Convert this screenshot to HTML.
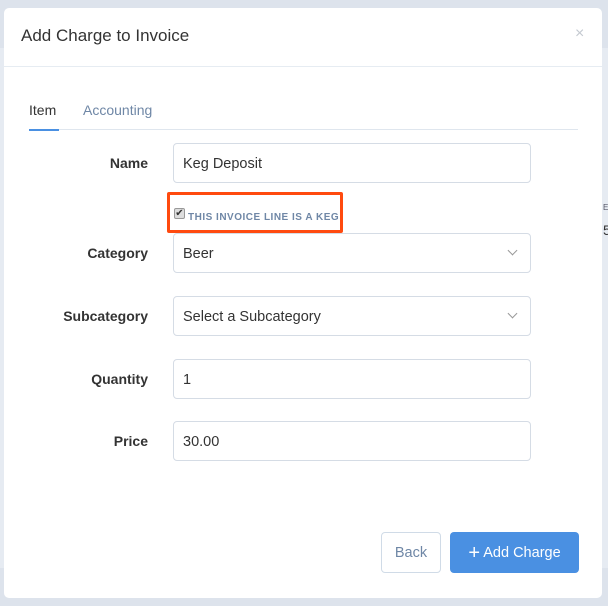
<!DOCTYPE html>
<html><head><style>
*{box-sizing:border-box;margin:0;padding:0}
body{width:608px;height:606px;background:#dde3ec;font-family:"Liberation Sans",sans-serif;position:relative;overflow:hidden}
.strip{position:absolute;left:0;top:48px;width:608px;height:520px;background:#e6ebf2}
.modal{position:absolute;left:4px;top:8px;width:598px;height:590px;background:#fff;border-radius:5px}
.abs{position:absolute}
.title{left:17px;top:18px;font-size:17px;color:#333}
.close{left:571px;top:17px;font-size:16px;color:#c4c9d0}
.hr{left:0;top:58px;width:598px;height:1px;background:#e6ecf2}
.tab{font-size:14px;top:94px}
.lab{font-size:14px;font-weight:bold;color:#333;width:144px;text-align:right;left:0}
.inp{left:169px;width:358px;height:40px;border:1px solid #d5dce5;border-radius:4px;font-size:14.5px;color:#333;padding:12px 9px}
.chev{position:absolute;right:14px;top:13px;width:7px;height:7px;border-right:1px solid #999;border-bottom:1px solid #999;transform:rotate(45deg)}
</style></head><body>
<div class="strip"></div>
<div class="abs" style="left:603px;top:203px;font-size:8px;color:#556">E</div>
<div class="abs" style="left:603px;top:222px;font-size:14px;color:#333">5</div>
<div class="modal">
<div class="abs title">Add Charge to Invoice</div>
<div class="abs close">×</div>
<div class="abs hr"></div>
<div class="abs tab" style="left:25px;color:#333">Item</div>
<div class="abs tab" style="left:79px;color:#6f87a6">Accounting</div>
<div class="abs" style="left:25px;top:121px;width:549px;height:1px;background:#dfe6ee"></div>
<div class="abs" style="left:25px;top:121px;width:30px;height:2px;background:#4a90e2"></div>

<div class="abs lab" style="top:147px">Name</div>
<div class="abs inp" style="top:135px">Keg Deposit</div>

<div class="abs" style="left:163px;top:184px;width:176px;height:41px;border:3px solid #ff4a0f;border-radius:2px"></div>
<div class="abs" style="left:170px;top:200px;width:11px;height:11px;background:#ddd;border:1px solid #999;border-radius:2px;font-size:10px;line-height:9px;text-align:center;color:#333">✔</div>
<div class="abs" style="left:184px;top:204px;font-size:10px;font-weight:bold;letter-spacing:0.5px;color:#6f87a6">THIS INVOICE LINE IS A KEG</div>

<div class="abs lab" style="top:237px">Category</div>
<div class="abs inp" style="top:225px">Beer<span class="chev"></span></div>

<div class="abs lab" style="top:300px">Subcategory</div>
<div class="abs inp" style="top:288px">Select a Subcategory<span class="chev"></span></div>

<div class="abs lab" style="top:363px">Quantity</div>
<div class="abs inp" style="top:351px">1</div>

<div class="abs lab" style="top:425px">Price</div>
<div class="abs inp" style="top:413px">30.00</div>

<div class="abs" style="left:377px;top:524px;width:60px;height:41px;border:1px solid #d0dbe7;border-radius:4px;font-size:14.5px;color:#6f87a6;text-align:center;line-height:41px">Back</div>
<div class="abs" style="left:446px;top:524px;width:129px;height:41px;background:#4a90e2;border-radius:4px;font-size:14.5px;color:#fff;text-align:center;line-height:42px"><span style="font-size:20px;vertical-align:-2px;font-weight:300">+</span> Add Charge</div>
</div>
</body></html>
